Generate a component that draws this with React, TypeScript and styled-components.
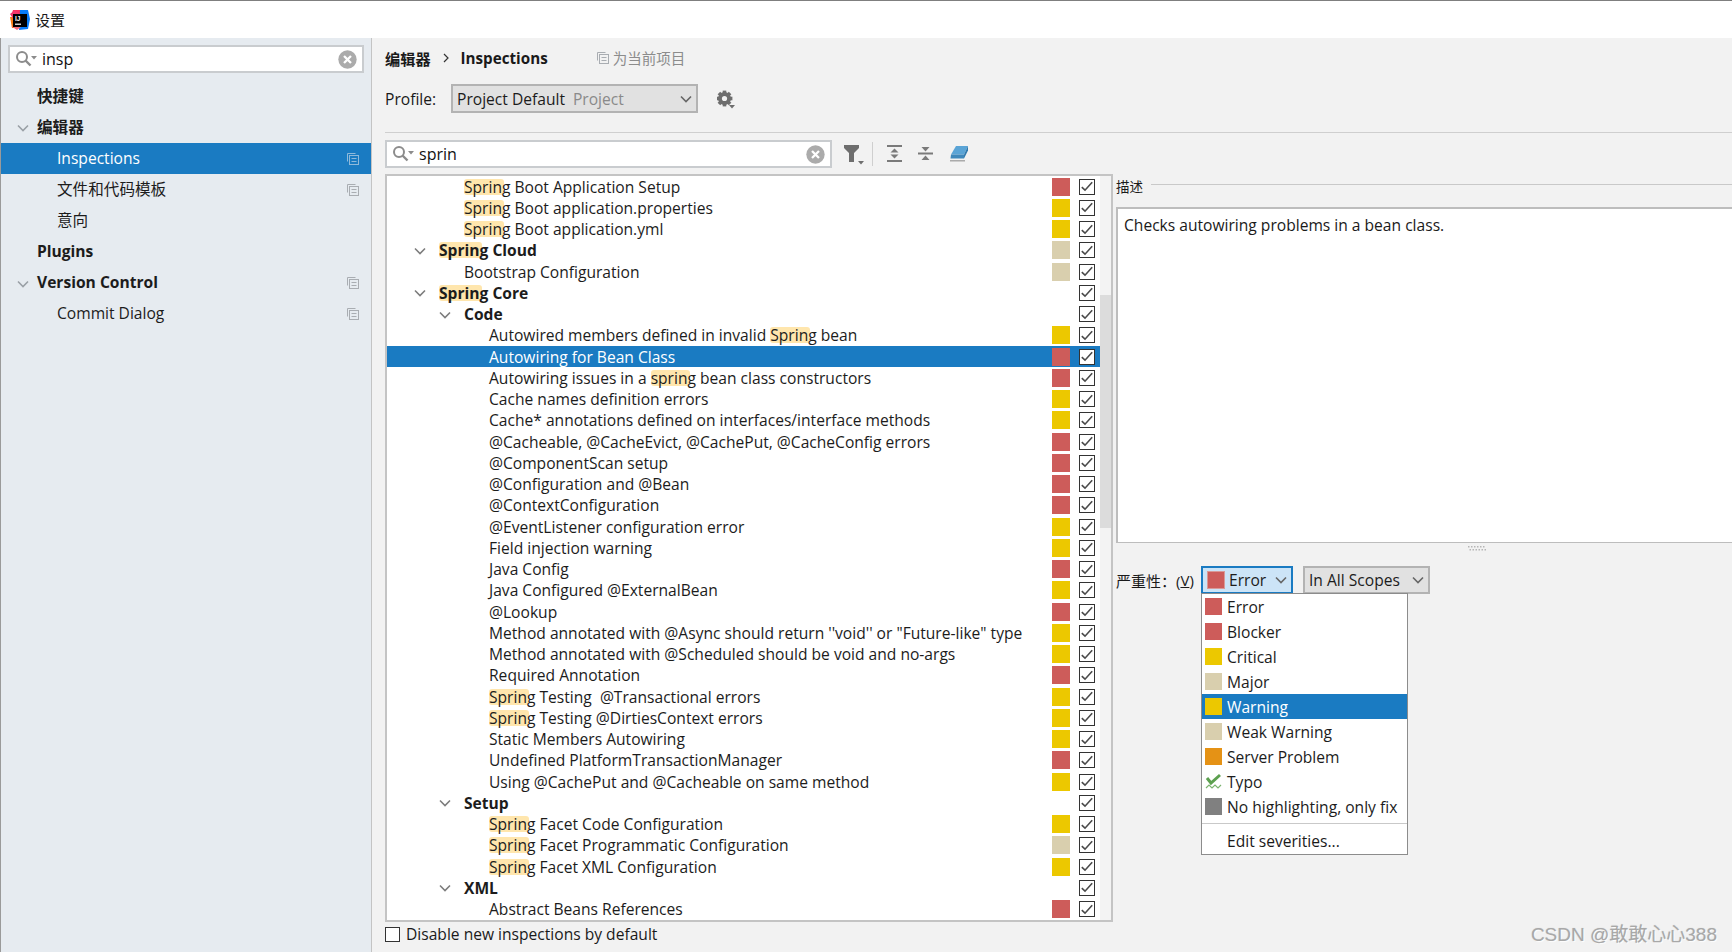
import React from 'react';
import styled, { createGlobalStyle } from 'styled-components';

const Global = createGlobalStyle`
  html, body { margin: 0; padding: 0; width: 1732px; height: 952px; overflow: hidden; background: #f2f2f2; }
  #root { width: 1732px; height: 952px; }
  * { box-sizing: border-box; }
`;

const FONT = `"Open Sans", "Noto Sans CJK SC", sans-serif`;

const Window = styled.div`
  width: 1732px; height: 952px; display: flex; flex-direction: column; position: relative; overflow: hidden;
  font-family: ${FONT}; font-size: 15.6px; color: #1a1a1a; background: #f2f2f2;
`;
const TitleBar = styled.div`
  height: 38px; flex: none; background: #fff; border-top: 1px solid #7f7f7f; display: flex; align-items: center; padding-left: 10px; gap: 5px; font-size: 15px;
`;
const Body = styled.div`
  flex: 1; display: flex; min-height: 0; border-left: 1px solid #9a9a9a;
`;
const Sidebar = styled.div`
  width: 371px; flex: none; background: #e6ebf0; border-right: 1px solid #c4c4c4; padding-top: 7px;
`;
const SearchBox = styled.div<{ $w: number; $ml?: number }>`
  width: ${p => p.$w}px; height: 28px; margin-left: ${p => p.$ml ?? 0}px; background: #fff; border: 2px solid #c9cccf; display: flex; align-items: center; padding: 0 5px 0 5px; font-size: 16px; flex: none;
`;
const SearchText = styled.span`
  flex: 1; margin-left: 4px; color: #111; line-height: 1;
`;
const NavList = styled.div`
  margin-top: 8px;
`;
const NavRow = styled.div<{ $selected?: boolean; $indent: number; $bold?: boolean }>`
  height: 31.1px; display: flex; align-items: center; padding-left: ${p => p.$indent}px; padding-right: 12px;
  font-weight: ${p => (p.$bold ? 700 : 400)};
  background: ${p => (p.$selected ? '#1a7bc2' : 'transparent')};
  color: ${p => (p.$selected ? '#fff' : '#1c1c1c')};
  position: relative;
`;
const NavChevron = styled.span`
  position: absolute; left: 16px; top: 10px; display: flex;
`;
const NavLabel = styled.span`flex: 1; position: relative; top: -1px;`;

const Main = styled.div`
  flex: 1; display: flex; flex-direction: column; min-width: 0; padding-left: 13px; position: relative;
`;
const Crumbs = styled.div`
  height: 46px; flex: none; display: flex; align-items: center; font-size: 15.2px; padding-bottom: 7px;
`;
const CrumbBold = styled.span`font-weight: 700;`;
const CrumbSep = styled.span`
  margin: 0 12px 0 12px; display: flex; align-items: center;
`;
const ForProject = styled.span`
  margin-left: 49px; color: #8c8c8c; display: flex; align-items: center; gap: 4px; font-size: 14.5px;
`;
const ProfileRow = styled.div`
  height: 29px; flex: none; display: flex; align-items: center;
`;
const Muted = styled.span`color: #8a8a8a; margin-left: 8px;`;
const Combo = styled.div<{ $w: number; $h?: number; $focus?: boolean }>`
  width: ${p => p.$w}px; height: ${p => p.$h ?? 28}px; flex: none; display: flex; align-items: center; padding: 0 4px 0 4px;
  background: ${p => (p.$focus ? '#cce4f7' : '#e1e1e1')};
  border: 2px solid ${p => (p.$focus ? '#1a7bc2' : '#b3b3b3')};
  color: #1c1c1c;
`;
const ComboText = styled.span`flex: 1; white-space: nowrap;`;
const ProfileLabel = styled.span`width: 66px; flex: none;`;
const GearWrap = styled.span`margin-left: 19px; display: flex;`;
const Separator = styled.div`
  height: 1px; flex: none; margin-top: 19px; background: #cfcfcf;
`;
const ToolRow = styled.div`
  height: 41px; flex: none; display: flex; align-items: flex-start; padding-top: 7px;
`;
const Tools = styled.div`
  display: flex; align-items: center; height: 27px; margin-left: 11px;
`;
const ToolDivider = styled.span`
  width: 1px; height: 24px; background: #cfcfcf; margin: 0 13px 0 7px;
`;
const ToolGap = styled.span<{ $w: number }>`width: ${p => p.$w}px; flex: none;`;
const Columns = styled.div`
  flex: 1; display: flex; min-height: 0;
`;
const LeftCol = styled.div`
  width: 728px; flex: none; display: flex; flex-direction: column;
`;
const TreeFrame = styled.div`
  height: 748px; flex: none; border: 2px solid #c4c4c4; background: #fff; display: flex; overflow: hidden;
`;
const TreeBody = styled.div`
  flex: 1; min-width: 0;
`;
const Row = styled.div<{ $selected?: boolean; $indent: number; $bold?: boolean }>`
  height: 21.25px; display: flex; align-items: center; position: relative; padding-left: ${p => p.$indent}px;
  font-weight: ${p => (p.$bold ? 700 : 400)}; white-space: pre;
  background: ${p => (p.$selected ? '#1a7bc2' : 'transparent')};
  color: ${p => (p.$selected ? '#fff' : '#1c1c1c')};
`;
const RowLabel = styled.span`flex: 1; min-width: 0;`;
const Hit = styled.span`
  display: inline-block; line-height: 16px; background: #ffe6ad; border-radius: 3px; padding-right: 2px; margin-right: -2px;
`;
const RowChevron = styled.span<{ $x: number }>`
  position: absolute; left: ${p => p.$x}px; top: 5px; display: flex;
`;
const Sev = styled.span<{ $c?: string }>`
  width: 18px; height: 18px; flex: none; margin-right: 9px; background: ${p => p.$c ?? 'transparent'};
`;
const Check = styled.span`
  width: 16px; height: 16px; flex: none; margin-right: 5px; background: #fff; border: 1px solid #333; display: flex; align-items: center; justify-content: center;
`;
const ScrollTrack = styled.div`
  width: 11px; flex: none; background: #f3f3f3; padding-top: 119px;
`;
const ScrollThumb = styled.div`
  height: 233px; background: #dcdcdc;
`;
const DisableRow = styled.div`
  display: flex; align-items: center; gap: 6px; margin-top: 1px; height: 22px;
`;
const EmptyBox = styled.span`
  width: 15px; height: 15px; border: 1px solid #333; background: #fff; flex: none;
`;
const RightCol = styled.div`
  flex: 1; min-width: 0; display: flex; flex-direction: column; padding-left: 3px; position: relative;
`;
const DescHead = styled.div`
  height: 33px; flex: none; display: flex; align-items: flex-start; gap: 8px; font-size: 13.5px; padding-top: 4px; line-height: 18px;
`;
const DescLine = styled.span`flex: 1; height: 1px; background: #c9c9c9; margin-top: 6px;`;
const DescBox = styled.div`
  height: 336px; flex: none; background: #fff; border: 2px solid #bdbdbd; border-right: none; border-bottom-width: 1px; padding: 5px 6px;
`;
const Grip = styled.div`
  height: 23px; flex: none; display: flex; padding-top: 3px; padding-left: 352px;
`;
const SevRow = styled.div`
  height: 28px; flex: none; display: flex; align-items: center;
`;
const SevLabel = styled.span`width: 85px; flex: none; display: flex; align-items: center; font-size: 15px;`;
const Mnemonic = styled.u``;
const ComboSwatch = styled.span`
  width: 18px; height: 18px; background: #cd5c5a; border: 1px solid #d89a98; margin-right: 4px; flex: none;
`;
const ScopeCombo = styled.div`margin-left: 10px;`;
const Menu = styled.div`
  position: absolute; left: 88px; top: 419px; width: 207px; height: 262px; background: #fff; border: 1px solid #8c8c8c;
`;
const MenuItem = styled.div<{ $selected?: boolean }>`
  height: 25px; display: flex; align-items: center; padding-left: 3px; gap: 5px;
  background: ${p => (p.$selected ? '#1a7bc2' : 'transparent')};
  color: ${p => (p.$selected ? '#fff' : '#1c1c1c')}; white-space: nowrap;
`;
const MenuSwatch = styled.span<{ $c: string }>`
  width: 17px; height: 17px; flex: none; background: ${p => p.$c};
`;
const MenuIcon = styled.span`width: 17px; height: 17px; flex: none; display: flex;`;
const MenuDivider = styled.div`height: 1px; background: #c9c9c9; margin-top: 4px;`;
const EditItem = styled.div`
  height: 33px; display: flex; align-items: center; padding-left: 25px;
`;
const Watermark = styled.div`
  position: absolute; right: 15px; bottom: 6px; font-family: "Liberation Sans", "Noto Sans CJK SC", sans-serif; font-size: 19px; color: #a8a8a8; text-shadow: 1px 1px 1px #ffffff, 0 0 1px #bdbdbd; white-space: nowrap;
`;

const RED = '#cd5c5a', YEL = '#ecc800', TAN = '#d9cfae';

const Chevron = ({ c = '#7d7d7d', s = 12 }: { c?: string; s?: number }) => (
  <svg width={s} height={s} viewBox="0 0 12 12" fill="none"><path d="M1 3.5 6 8.5l5-5" stroke={c} strokeWidth="1.6" /></svg>
);
const ClearIcon = () => (
  <svg width="19" height="19" viewBox="0 0 18 18">
    <circle cx="9" cy="9" r="8.7" fill="#ababab" />
    <path d="M5.7 5.7l6.6 6.6M12.3 5.7l-6.6 6.6" stroke="#fff" strokeWidth="2.2" />
  </svg>
);
const SearchIcon = () => (
  <svg width="23" height="18" viewBox="0 0 23 18" fill="none">
    <circle cx="7" cy="7" r="5" stroke="#8c8c8c" strokeWidth="2" />
    <path d="M10.5 10.5l5 5" stroke="#8c8c8c" strokeWidth="2.4" />
    <path d="M16 6h6l-3 3.4z" fill="#8c8c8c" />
  </svg>
);
const CopyIcon = ({ c = '#a9adb2' }: { c?: string }) => (
  <svg width="12" height="12" viewBox="0 0 12 12" fill="none">
    <path d="M8.5 .5H.5v8" stroke={c} />
    <rect x="2.5" y="2.5" width="9" height="9" fill="none" stroke={c} />
    <path d="M4.5 5.5h5M4.5 8.5h5" stroke={c} />
  </svg>
);
const Logo = () => (
  <svg width="20" height="20" viewBox="0 0 20 20" style={{ flex: 'none' }}>
    <path d="M3 0h8v6H1z" fill="#fe315d" />
    <path d="M0 7h4v11H2z" fill="#f97a12" />
    <path d="M10 0h8l2 9-2 10-9 1z" fill="#087cfa" />
    <path d="M0 4l5-4 5 4-6 6z" fill="#f4386e" />
    <path d="M1 16l6 4 4-3H4z" fill="#f36b7a" />
    <rect x="3" y="4" width="14" height="13" fill="#000" />
    <text x="5" y="10.5" fontFamily="Liberation Sans" fontWeight="700" fontSize="6.5" fill="#fff">IJ</text>
    <rect x="5" y="13.6" width="6" height="1.2" fill="#fff" />
  </svg>
);
const Gear = () => (
  <svg width="20" height="20" viewBox="0 0 20 20">
    <g fill="#6e6e6e">
      {[0, 45, 90, 135].map(a => (
        <rect key={a} x="5.7" y="1.6" width="3.6" height="15.8" transform={`rotate(${a} 7.5 9.5)`} />
      ))}
    </g>
    <circle cx="7.5" cy="9.5" r="5" fill="none" stroke="#6e6e6e" strokeWidth="3" />
    <circle cx="7.5" cy="9.5" r="2.6" fill="#f2f2f2" />
    <path d="M12 16h6l-3 3.4z" fill="#6e6e6e" />
  </svg>
);
const Filter = () => (
  <svg width="22" height="24" viewBox="0 0 22 24">
    <path d="M1 3h15v3l-5 5v9H6v-9L1 6z" fill="#6e6e6e" />
    <path d="M15 19h6l-3 3.5z" fill="#6e6e6e" />
  </svg>
);
const Expand = () => (
  <svg width="17" height="19" viewBox="0 0 17 19" fill="#7a7a7a">
    <rect x="1" y="1" width="15" height="2" /><rect x="1" y="16" width="15" height="2" />
    <path d="M8.5 4.5l4 4h-8zM8.5 14.5l-4-4h8z" />
  </svg>
);
const Collapse = () => (
  <svg width="17" height="19" viewBox="0 0 17 19" fill="#7a7a7a">
    <rect x="1" y="8.5" width="15" height="2" />
    <path d="M8.5 7.5l-4-4.5h8zM8.5 11.5l4 4.5h-8z" />
  </svg>
);
const Eraser = () => (
  <svg width="20" height="18" viewBox="0 0 20 18">
    <path d="M7 1h12l-4 8.5H2z" fill="#5aa4d6" />
    <path d="M2 9.5h13v4H1.5z" fill="#3f88bb" />
    <path d="M15 9.5L19 1v4.5L15 13.5z" fill="#2f79ad" />
    <rect x="1" y="15" width="15" height="1.5" fill="#8d8d8d" opacity=".7" />
  </svg>
);
const Tick = () => (
  <svg width="12" height="11" viewBox="0 0 12 11" fill="none"><path d="M.8 6.2 4 9.2 11.2 1.2" stroke="#4a4a4a" strokeWidth="1.6" /></svg>
);
const Typo = () => (
  <svg width="17" height="17" viewBox="0 0 17 17" fill="none">
    <path d="M2 5l4 5 9-8" stroke="#5ca04f" strokeWidth="3" />
    <path d="M1 15l3-3 3 3 3-3 3 3 3-3" stroke="#7bb36f" strokeWidth="1.2" />
  </svg>
);

type Node = { t: string; lvl: number; sev?: string; bold?: boolean; open?: boolean; hit?: [string, string, string]; sel?: boolean };

const h = (a: string, b: string, c: string): [string, string, string] => [a, b, c];

const rows: Node[] = [
  { t: '', hit: h('', 'Sprin', 'g Boot Application Setup'), lvl: 2, sev: RED },
  { t: '', hit: h('', 'Sprin', 'g Boot application.properties'), lvl: 2, sev: YEL },
  { t: '', hit: h('', 'Sprin', 'g Boot application.yml'), lvl: 2, sev: YEL },
  { t: '', hit: h('', 'Sprin', 'g Cloud'), lvl: 1, bold: true, open: true, sev: TAN },
  { t: 'Bootstrap Configuration', lvl: 2, sev: TAN },
  { t: '', hit: h('', 'Sprin', 'g Core'), lvl: 1, bold: true, open: true },
  { t: 'Code', lvl: 2, bold: true, open: true },
  { t: '', hit: h('Autowired members defined in invalid ', 'Sprin', 'g bean'), lvl: 3, sev: YEL },
  { t: 'Autowiring for Bean Class', lvl: 3, sev: RED, sel: true },
  { t: '', hit: h('Autowiring issues in a ', 'sprin', 'g bean class constructors'), lvl: 3, sev: RED },
  { t: 'Cache names definition errors', lvl: 3, sev: YEL },
  { t: 'Cache* annotations defined on interfaces/interface methods', lvl: 3, sev: YEL },
  { t: '@Cacheable, @CacheEvict, @CachePut, @CacheConfig errors', lvl: 3, sev: RED },
  { t: '@ComponentScan setup', lvl: 3, sev: RED },
  { t: '@Configuration and @Bean', lvl: 3, sev: RED },
  { t: '@ContextConfiguration', lvl: 3, sev: RED },
  { t: '@EventListener configuration error', lvl: 3, sev: YEL },
  { t: 'Field injection warning', lvl: 3, sev: YEL },
  { t: 'Java Config', lvl: 3, sev: RED },
  { t: 'Java Configured @ExternalBean', lvl: 3, sev: YEL },
  { t: '@Lookup', lvl: 3, sev: RED },
  { t: "Method annotated with @Async should return ''void'' or \"Future-like\" type", lvl: 3, sev: YEL },
  { t: 'Method annotated with @Scheduled should be void and no-args', lvl: 3, sev: YEL },
  { t: 'Required Annotation', lvl: 3, sev: RED },
  { t: '', hit: h('', 'Sprin', 'g Testing  @Transactional errors'), lvl: 3, sev: YEL },
  { t: '', hit: h('', 'Sprin', 'g Testing @DirtiesContext errors'), lvl: 3, sev: YEL },
  { t: 'Static Members Autowiring', lvl: 3, sev: YEL },
  { t: 'Undefined PlatformTransactionManager', lvl: 3, sev: RED },
  { t: 'Using @CachePut and @Cacheable on same method', lvl: 3, sev: YEL },
  { t: 'Setup', lvl: 2, bold: true, open: true },
  { t: '', hit: h('', 'Sprin', 'g Facet Code Configuration'), lvl: 3, sev: YEL },
  { t: '', hit: h('', 'Sprin', 'g Facet Programmatic Configuration'), lvl: 3, sev: TAN },
  { t: '', hit: h('', 'Sprin', 'g Facet XML Configuration'), lvl: 3, sev: YEL },
  { t: 'XML', lvl: 2, bold: true, open: true },
  { t: 'Abstract Beans References', lvl: 3, sev: RED },
];
const INDENT = [0, 52, 77, 102];

const menu = [
  ['Error', RED], ['Blocker', RED], ['Critical', YEL], ['Major', TAN], ['Warning', YEL],
  ['Weak Warning', TAN], ['Server Problem', '#e59215'], ['Typo', ''], ['No highlighting, only fix', '#808080'],
];

const nav = [
  { t: '快捷键', i: 36, bold: true },
  { t: '编辑器', i: 36, bold: true, open: true },
  { t: 'Inspections', i: 56, sel: true, copy: true },
  { t: '文件和代码模板', i: 56, copy: true },
  { t: '意向', i: 56 },
  { t: 'Plugins', i: 36, bold: true },
  { t: 'Version Control', i: 36, bold: true, open: true, copy: true },
  { t: 'Commit Dialog', i: 56, copy: true },
];

export default function App() {
  return (
    <Window>
      <Global />
      <TitleBar><Logo />设置</TitleBar>
      <Body>
        <Sidebar>
          <SearchBox $w={356} $ml={7}>
            <SearchIcon /><SearchText>insp</SearchText><ClearIcon />
          </SearchBox>
          <NavList>
            {nav.map(n => (
              <NavRow key={n.t} $indent={n.i} $bold={n.bold} $selected={n.sel}>
                {n.open && <NavChevron><Chevron c="#9aa0a6" /></NavChevron>}
                <NavLabel>{n.t}</NavLabel>
                {n.copy && <CopyIcon c={n.sel ? '#8fb9da' : '#a9adb2'} />}
              </NavRow>
            ))}
          </NavList>
        </Sidebar>
        <Main>
          <Crumbs>
            <CrumbBold>编辑器</CrumbBold>
            <CrumbSep><svg width="6" height="10" viewBox="0 0 6 10" fill="none"><path d="M1 1l4 4-4 4" stroke="#333" strokeWidth="1.2" /></svg></CrumbSep>
            <CrumbBold>Inspections</CrumbBold>
            <ForProject><CopyIcon />为当前项目</ForProject>
          </Crumbs>
          <ProfileRow>
            <ProfileLabel>Profile:</ProfileLabel>
            <Combo $w={247} $h={29}>
              <ComboText>Project Default<Muted>Project</Muted></ComboText>
              <Chevron c="#666" />
            </Combo>
            <GearWrap><Gear /></GearWrap>
          </ProfileRow>
          <Separator />
          <ToolRow>
            <SearchBox $w={447}>
              <SearchIcon /><SearchText>sprin</SearchText><ClearIcon />
            </SearchBox>
            <Tools>
              <Filter />
              <ToolDivider />
              <Expand />
              <ToolGap $w={14} />
              <Collapse />
              <ToolGap $w={15} />
              <Eraser />
            </Tools>
          </ToolRow>
          <Columns>
            <LeftCol>
              <TreeFrame>
                <TreeBody>
                  {rows.map((r, i) => (
                    <Row key={i} $indent={INDENT[r.lvl]} $bold={r.bold} $selected={r.sel}>
                      {r.open && <RowChevron $x={INDENT[r.lvl] - 25}><Chevron /></RowChevron>}
                      <RowLabel>
                        {r.hit ? <>{r.hit[0]}<Hit>{r.hit[1]}</Hit>{r.hit[2]}</> : r.t}
                      </RowLabel>
                      <Sev $c={r.sev} />
                      <Check><Tick /></Check>
                    </Row>
                  ))}
                </TreeBody>
                <ScrollTrack><ScrollThumb /></ScrollTrack>
              </TreeFrame>
              <DisableRow><EmptyBox />Disable new inspections by default</DisableRow>
            </LeftCol>
            <RightCol>
              <DescHead>描述<DescLine /></DescHead>
              <DescBox>Checks autowiring problems in a bean class.</DescBox>
              <Grip>
                <svg width="18" height="5" viewBox="0 0 18 5" fill="#b5b5b5">
                  {[0, 3, 6, 9, 12, 15].map(x => <rect key={x} x={x} y="0" width="1.5" height="1.5" />)}
                  {[1.5, 4.5, 7.5, 10.5, 13.5, 16.5].map(x => <rect key={x} x={x} y="3" width="1.5" height="1.5" />)}
                </svg>
              </Grip>
              <SevRow>
                <SevLabel>严重性：(<Mnemonic>V</Mnemonic>)</SevLabel>
                <Combo $w={92} $focus>
                  <ComboSwatch />
                  <ComboText>Error</ComboText>
                  <Chevron c="#666" />
                </Combo>
                <ScopeCombo>
                  <Combo $w={127}>
                    <ComboText>In All Scopes</ComboText>
                    <Chevron c="#666" />
                  </Combo>
                </ScopeCombo>
              </SevRow>
              <Menu>
                {menu.map(([t, c]) => (
                  <MenuItem key={t} $selected={t === 'Warning'}>
                    {c ? <MenuSwatch $c={c} /> : <MenuIcon><Typo /></MenuIcon>}
                    {t}
                  </MenuItem>
                ))}
                <MenuDivider />
                <EditItem>Edit severities...</EditItem>
              </Menu>
            </RightCol>
          </Columns>
        </Main>
      </Body>
      <Watermark>CSDN @敢敢心心388</Watermark>
    </Window>
  );
}
